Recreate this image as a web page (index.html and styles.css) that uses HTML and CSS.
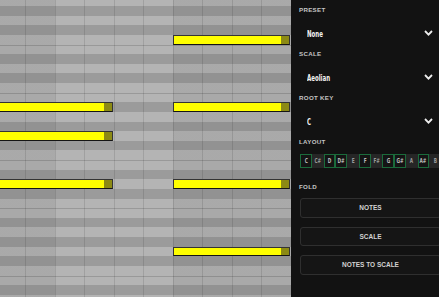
FILE: index.html
```html
<!DOCTYPE html>
<html lang="en">
<head>
<meta charset="utf-8">
<title>Piano roll</title>
<link rel="stylesheet" href="styles.css">
</head>
<body>
<div class="app">
  <div class="roll">
    <div class="lanes">
      <div class="lane w"></div>
      <div class="lane b"></div>
      <div class="lane w"></div>
      <div class="lane b"></div>
      <div class="lane w"><div class="note late"></div></div>
      <div class="lane w sep"></div>
      <div class="lane b"></div>
      <div class="lane w"></div>
      <div class="lane b"></div>
      <div class="lane w"></div>
      <div class="lane w sep"></div>
      <div class="lane b"><div class="note early"></div><div class="note late"></div></div>
      <div class="lane w"></div>
      <div class="lane b"></div>
      <div class="lane w"><div class="note early"></div></div>
      <div class="lane b"></div>
      <div class="lane w"></div>
      <div class="lane w sep"></div>
      <div class="lane b"></div>
      <div class="lane w"><div class="note early"></div><div class="note late"></div></div>
      <div class="lane b"></div>
      <div class="lane w"></div>
      <div class="lane w sep"></div>
      <div class="lane b"></div>
      <div class="lane w"></div>
      <div class="lane b"></div>
      <div class="lane w"><div class="note late"></div></div>
      <div class="lane b"></div>
      <div class="lane w"></div>
      <div class="lane w sep"></div>
      <div class="lane b"></div>
      <div class="lane w"></div>
    </div>
  </div>
  <aside class="panel">
    <div class="label">PRESET</div>
    <div class="select"><span class="value">None</span><svg class="chev" viewBox="0 0 9 6" width="9" height="6"><path d="M1 1 L4.5 4.6 L8 1"/></svg></div>
    <div class="label">SCALE</div>
    <div class="select"><span class="value">Aeolian</span><svg class="chev" viewBox="0 0 9 6" width="9" height="6"><path d="M1 1 L4.5 4.6 L8 1"/></svg></div>
    <div class="label">ROOT KEY</div>
    <div class="select"><span class="value">C</span><svg class="chev" viewBox="0 0 9 6" width="9" height="6"><path d="M1 1 L4.5 4.6 L8 1"/></svg></div>
    <div class="label">LAYOUT</div>
    <div class="keys">
      <span class="key on"><span class="kt">C</span></span>
      <span class="key"><span class="kt">C#</span></span>
      <span class="key on"><span class="kt">D</span></span>
      <span class="key on"><span class="kt">D#</span></span>
      <span class="key"><span class="kt">E</span></span>
      <span class="key on"><span class="kt">F</span></span>
      <span class="key"><span class="kt">F#</span></span>
      <span class="key on"><span class="kt">G</span></span>
      <span class="key on"><span class="kt">G#</span></span>
      <span class="key"><span class="kt">A</span></span>
      <span class="key on"><span class="kt">A#</span></span>
      <span class="key"><span class="kt">B</span></span>
    </div>
    <div class="label fold">FOLD</div>
    <div class="btns">
      <button class="btn">NOTES</button>
      <button class="btn">SCALE</button>
      <button class="btn">NOTES TO SCALE</button>
    </div>
  </aside>
</div>
</body>
</html>
```

FILE: styles.css
```css
html, body {
  margin: 0;
  height: 100%;
  overflow: hidden;
  background: #121212;
}

.app {
  display: flex;
  width: 439px;
  height: 297px;
  overflow: hidden;
}

/* ---------- piano roll ---------- */
.roll {
  flex: none;
  width: 291px;
  height: 297px;
  overflow: hidden;
}

.lanes {
  display: flex;
  flex-direction: column;
  width: 295px;
  margin: -3.6px 0 0 -4px;
}

.lane {
  flex: none;
  box-sizing: border-box;
  height: 9.625px;
  display: grid;
  grid-template-columns: repeat(10, 29.5px);
  background-color: #b4b4b4;
  background-image:
    repeating-linear-gradient(90deg, rgba(0, 0, 0, 0.11) 0 1px, transparent 1px 29.5px),
    linear-gradient(90deg, rgba(0, 0, 0, 0.06) 0 59px, transparent 59px 177px, rgba(0, 0, 0, 0.06) 177px);
}

.lane.b {
  background-color: #9b9b9b;
}

.lane.sep {
  border-top: 1px solid rgba(0, 0, 0, 0.15);
}

.note {
  grid-row: 1;
  box-sizing: border-box;
  height: 100%;
  margin-right: 1px;
  border: 1px solid #343434;
  border-bottom-color: #141414;
  background: linear-gradient(90deg, #ffff00 0 calc(100% - 8px), #8c8a14 0);
}

.note.early {
  grid-column: 1 / 5;
}

.note.late {
  grid-column: 7 / 11;
}

/* ---------- side panel ---------- */
.panel {
  flex: none;
  width: 152px;
  box-sizing: border-box;
  padding-left: 8px;
  background: #121212;
  font-family: "Liberation Sans", Arial, sans-serif;
}

.label {
  padding-top: 4px;
  line-height: 12px;
  font-size: 6.2px;
  font-weight: 700;
  letter-spacing: 0.3px;
  color: #c4c4c4;
}

.label.fold {
  margin-top: 8.5px;
}

.select {
  display: flex;
  align-items: center;
  justify-content: space-between;
  height: 22px;
  margin-top: 6px;
  padding: 0 10px 0 8px;
}

.value {
  display: inline-block;
  font-family: "DejaVu Sans Condensed", "DejaVu Sans", sans-serif;
  font-weight: 700;
  font-size: 9.5px;
  color: #f2f2f2;
  transform: scaleX(0.64);
  transform-origin: left center;
}

.chev {
  display: block;
  fill: none;
  stroke: #ededed;
  stroke-width: 1.8;
}

.keys {
  display: grid;
  grid-template-columns: repeat(12, 11.75px);
  height: 14px;
  margin: 6px 0 0 1px;
}

.key {
  box-sizing: border-box;
  display: flex;
  align-items: center;
  justify-content: center;
  border: 1px solid transparent;
  background: #262626;
  color: #9a9a9a;
  font-family: "DejaVu Sans Condensed", "DejaVu Sans", sans-serif;
  font-weight: 700;
  font-size: 6.8px;
}

.kt {
  display: inline-block;
  transform: scaleX(0.7);
}

.key.on {
  border-color: #1b6b3b;
  background: #141414;
  color: #b8b8b8;
}

.btns {
  display: flex;
  flex-direction: column;
  gap: 9px;
  margin: 5.5px 0 0 1px;
}

.btn {
  box-sizing: border-box;
  width: 141px;
  height: 19.5px;
  padding: 0;
  border: 1px solid #2f2f2f;
  border-radius: 3px;
  background: #151515;
  color: #d2d2d2;
  font-family: "Liberation Sans", Arial, sans-serif;
  font-weight: 700;
  font-size: 6.5px;
}
```
